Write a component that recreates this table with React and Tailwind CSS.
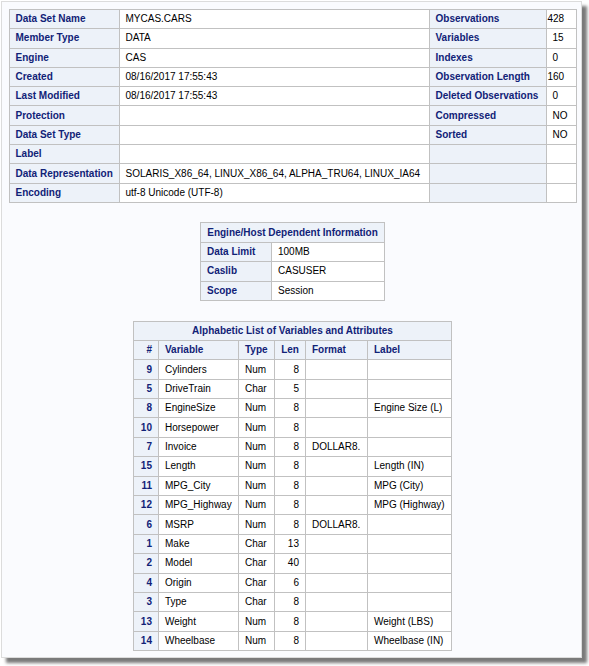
import React from "react";

// Data set attributes, left and right halves share each row
const attrRows = [
  ["Data Set Name", "MYCAS.CARS", "Observations", "428", true],
  ["Member Type", "DATA", "Variables", "15"],
  ["Engine", "CAS", "Indexes", "0"],
  ["Created", "08/16/2017 17:55:43", "Observation Length", "160", true],
  ["Last Modified", "08/16/2017 17:55:43", "Deleted Observations", "0"],
  ["Protection", "", "Compressed", "NO"],
  ["Data Set Type", "", "Sorted", "NO"],
  ["Label", "", "", ""],
  [
    "Data Representation",
    "SOLARIS_X86_64, LINUX_X86_64, ALPHA_TRU64, LINUX_IA64",
    "",
    "",
  ],
  ["Encoding", "utf-8 Unicode (UTF-8)", "", ""],
];

const engineRows = [
  ["Data Limit", "100MB"],
  ["Caslib", "CASUSER"],
  ["Scope", "Session"],
];

const variables = [
  [9, "Cylinders", "Num", 8, "", ""],
  [5, "DriveTrain", "Char", 5, "", ""],
  [8, "EngineSize", "Num", 8, "", "Engine Size (L)"],
  [10, "Horsepower", "Num", 8, "", ""],
  [7, "Invoice", "Num", 8, "DOLLAR8.", ""],
  [15, "Length", "Num", 8, "", "Length (IN)"],
  [11, "MPG_City", "Num", 8, "", "MPG (City)"],
  [12, "MPG_Highway", "Num", 8, "", "MPG (Highway)"],
  [6, "MSRP", "Num", 8, "DOLLAR8.", ""],
  [1, "Make", "Char", 13, "", ""],
  [2, "Model", "Char", 40, "", ""],
  [4, "Origin", "Char", 6, "", ""],
  [3, "Type", "Char", 8, "", ""],
  [13, "Weight", "Num", 8, "", "Weight (LBS)"],
  [14, "Wheelbase", "Num", 8, "", "Wheelbase (IN)"],
];

const hd =
  "border border-[#c1c1c1] bg-[#edf2f9] text-[#112277] font-bold px-[6px] py-0 whitespace-nowrap";
const dt =
  "border border-[#c1c1c1] bg-white text-black px-[6px] py-0 whitespace-nowrap";

const App = () => {
  return (
    <div
      className="w-[589px] h-[666px] bg-white pt-[1px] pl-[1px] text-[10px] leading-[12px]"
      style={{ fontFamily: '"Liberation Sans", Arial, sans-serif' }}
    >
      <div className="w-[581px] h-[657px] border border-[#dcdcdc] bg-[#fafbfe] shadow-[5px_5px_3px_#7a7a7a] pl-[7px] pr-[5px] pt-[7px] flex flex-col items-center gap-[19.5px]">
        {/* Data set attributes */}
        <table className="table-fixed border-collapse w-[567px]">
          <colgroup>
            <col className="w-[110px]" />
            <col className="w-[310px]" />
            <col className="w-[117px]" />
            <col className="w-[30px]" />
          </colgroup>
          <tbody>
            {attrRows.map((r, i) => (
              <tr key={i} className="h-[19.3px]">
                <th className={hd + " text-left"}>{r[0]}</th>
                <td className={dt}>{r[1]}</td>
                <th className={hd + " text-left"}>{r[2]}</th>
                <td className={dt + (r[4] ? " !pl-[1px]" : "")}>{r[3]}</td>
              </tr>
            ))}
          </tbody>
        </table>

        {/* Engine/Host info */}
        <table className="table-fixed border-collapse w-[184px]">
          <colgroup>
            <col className="w-[71px]" />
            <col className="w-[113px]" />
          </colgroup>
          <thead>
            <tr className="h-[19.4px]">
              <th colSpan={2} className={hd + " text-center"}>
                Engine/Host Dependent Information
              </th>
            </tr>
          </thead>
          <tbody>
            {engineRows.map((r) => (
              <tr key={r[0]} className="h-[19.4px]">
                <th className={hd + " text-left"}>{r[0]}</th>
                <td className={dt}>{r[1]}</td>
              </tr>
            ))}
          </tbody>
        </table>

        {/* Variables list */}
        <table className="table-fixed border-collapse w-[318px]">
          <colgroup>
            <col className="w-[25px]" />
            <col className="w-[80px]" />
            <col className="w-[36px]" />
            <col className="w-[31px]" />
            <col className="w-[62px]" />
            <col className="w-[84px]" />
          </colgroup>
          <thead>
            <tr className="h-[19.4px]">
              <th colSpan={6} className={hd + " text-center"}>
                Alphabetic List of Variables and Attributes
              </th>
            </tr>
            <tr className="h-[19.4px]">
              <th className={hd + " text-right"}>#</th>
              <th className={hd + " text-left"}>Variable</th>
              <th className={hd + " text-left"}>Type</th>
              <th className={hd + " text-right"}>Len</th>
              <th className={hd + " text-left"}>Format</th>
              <th className={hd + " text-left"}>Label</th>
            </tr>
          </thead>
          <tbody>
            {variables.map((v) => (
              <tr key={v[0]} className="h-[19.4px]">
                <th className={hd + " text-right"}>{v[0]}</th>
                <td className={dt}>{v[1]}</td>
                <td className={dt}>{v[2]}</td>
                <td className={dt + " text-right"}>{v[3]}</td>
                <td className={dt}>{v[4]}</td>
                <td className={dt}>{v[5]}</td>
              </tr>
            ))}
          </tbody>
        </table>
      </div>
    </div>
  );
};

export default App;
